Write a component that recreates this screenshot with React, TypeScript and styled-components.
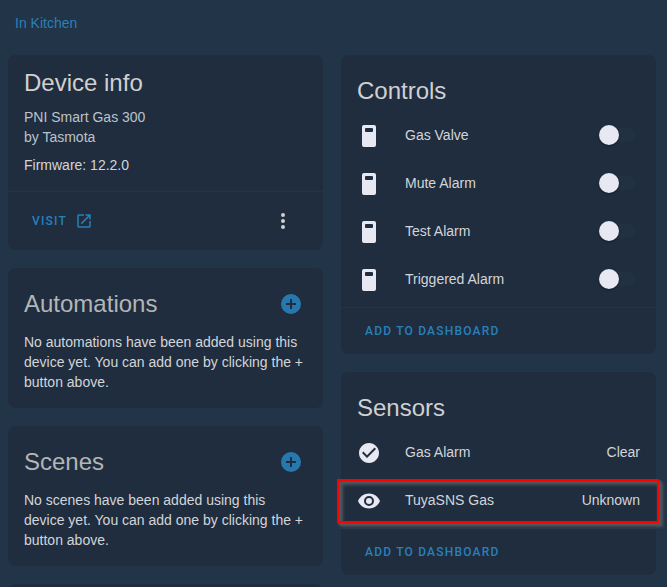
import React from "react";
import styled, { createGlobalStyle } from "styled-components";

const color = {
  page: "#223447",
  card: "#1f2d3f",
  divider: "#233447",
  link: "#2980b9",
  accent: "#2778ad",
  title: "#d0d0d0",
  mutedTitle: "#b4b5b6",
  text: "#d3d5d8",
  secondary: "#bcc3c9",
  icon: "#e8e8f3",
};

const GlobalStyle = createGlobalStyle`
  * { box-sizing: border-box; }
  html { scrollbar-width: none; background: ${color.page}; }
  body {
    margin: 0;
    background: ${color.page};
    color: ${color.text};
    font: 14px/20px "Liberation Sans", Arial, sans-serif;
  }
  button { font: inherit; border: 0; background: none; cursor: pointer; }
`;

const Page = styled.main`
  padding: 13px 11px 0 8px;
  height: 100vh;
  overflow-y: auto;
  scrollbar-width: none;
`;

const AreaBar = styled.nav`
  padding: 0 7px 22px;
`;

const AreaLink = styled.a`
  color: ${color.link};
  text-decoration: none;
`;

const Columns = styled.div`
  display: grid;
  grid-template-columns: 1fr 1fr;
  gap: 18px;
  align-items: start;
`;

const Column = styled.div`
  display: flex;
  flex-direction: column;
  gap: 18px;
  min-width: 0;
`;

const Card = styled.section`
  background: ${color.card};
  border-radius: 8px;
  min-height: 48px;
`;

const CardHeader = styled.header<{ $list?: boolean }>`
  display: flex;
  align-items: center;
  justify-content: space-between;
  padding: ${(p) => (p.$list ? "24px 16px 8px" : "24px 20px 16px 16px")};
`;

const Title = styled.h1<{ $muted?: boolean }>`
  margin: 0;
  font-size: 24px;
  line-height: 24px;
  font-weight: 400;
  color: ${(p) => (p.$muted ? color.mutedTitle : color.title)};
`;

const CardBody = styled.div`
  padding: 0 16px 16px;
`;

const InfoBody = styled.div`
  display: flex;
  flex-direction: column;
  padding: 16px;
`;

const Model = styled.div`
  margin: 12px 0 8px;
  color: ${color.secondary};
`;

const Paragraph = styled.p`
  margin: 0;
`;

const Actions = styled.footer`
  display: flex;
  align-items: center;
  justify-content: space-between;
  border-top: 1px solid ${color.divider};
  padding: 5px 16px;
`;

const TextButton = styled.button`
  && {
    display: inline-flex;
    align-items: center;
    gap: 8px;
    height: 36px;
    padding: 0 8px;
    color: ${color.link};
    font: 500 12px/16px Roboto, sans-serif;
    letter-spacing: 0.1em;
    text-transform: uppercase;
    text-decoration: none;
  }
`;

const IconButton = styled.button<{ $size: number; $tone: string }>`
  display: grid;
  place-items: center;
  width: ${(p) => p.$size}px;
  height: ${(p) => p.$size}px;
  padding: 0;
  color: ${(p) => p.$tone};
`;

const Icon = styled.svg`
  display: block;
  flex: none;
  fill: currentColor;
`;

const List = styled.ul`
  list-style: none;
  margin: 0;
  padding: 0 0 4px;
`;

const Row = styled.li`
  position: relative;
  display: flex;
  align-items: center;
  gap: 16px;
  height: 48px;
  padding: 0 16px 0 8px;
`;

const RowIcon = styled.span`
  display: grid;
  place-items: center;
  width: 40px;
  padding-top: 2px;
  color: ${color.icon};
`;

const RowLabel = styled.label`
  flex: 1;
`;

const RowName = styled.span`
  flex: 1;
`;

const Switch = styled.input`
  appearance: none;
  display: flex;
  align-items: center;
  width: 32px;
  height: 14px;
  margin: 0 5px 0 0;
  border-radius: 7px;
  background: #213142;
  cursor: pointer;

  &::before {
    content: "";
    flex: none;
    width: 20px;
    height: 20px;
    margin-left: -4px;
    border-radius: 50%;
    background: ${color.icon};
    box-shadow: 0 1px 3px rgba(0, 0, 0, 0.3);
  }

  &:checked::before {
    margin-left: 16px;
  }
`;

const Highlight = styled.span`
  position: absolute;
  inset: 3px -3px 1px -4px;
  border: 2px solid #ff0000;
  filter: drop-shadow(2px 2px 1px #55585e) drop-shadow(2px 2px 1px #55585e);
  pointer-events: none;
`;

const paths = {
  open: "M14,3V5H17.59L7.76,14.83L9.17,16.24L19,6.41V10H21V3M19,19H5V5H12V3H5C3.89,3 3,3.9 3,5V19A2,2 0 0,0 5,21H19A2,2 0 0,0 21,19V12H19V19Z",
  dots: "M12,16A2,2 0 0,1 14,18A2,2 0 0,1 12,20A2,2 0 0,1 10,18A2,2 0 0,1 12,16M12,10A2,2 0 0,1 14,12A2,2 0 0,1 12,14A2,2 0 0,1 10,12A2,2 0 0,1 12,10M12,4A2,2 0 0,1 14,6A2,2 0 0,1 12,8A2,2 0 0,1 10,6A2,2 0 0,1 12,4Z",
  plus: "M17,13H13V17H11V13H7V11H11V7H13V11H17M12,2A10,10 0 0,0 2,12A10,10 0 0,0 12,22A10,10 0 0,0 22,12A10,10 0 0,0 12,2Z",
  valve: "M7,1H17A2,2 0 0,1 19,3V21A2,2 0 0,1 17,23H7A2,2 0 0,1 5,21V3A2,2 0 0,1 7,1M9,4A1,1 0 0,0 8,5V7A1,1 0 0,0 9,8H15A1,1 0 0,0 16,7V5A1,1 0 0,0 15,4Z",
  check: "M12 2C6.5 2 2 6.5 2 12S6.5 22 12 22 22 17.5 22 12 17.5 2 12 2M10 17L5 12L6.41 10.59L10 14.17L17.59 6.58L19 8L10 17Z",
  eye: "M12,9A3,3 0 0,0 9,12A3,3 0 0,0 12,15A3,3 0 0,0 15,12A3,3 0 0,0 12,9M12,17A5,5 0 0,1 7,12A5,5 0 0,1 12,7A5,5 0 0,1 17,12A5,5 0 0,1 12,17M12,4.5C7,4.5 2.73,7.61 1,12C2.73,16.39 7,19.5 12,19.5C17,19.5 21.27,16.39 23,12C21.27,7.61 17,4.5 12,4.5Z",
};

type Glyph = keyof typeof paths;

function Mdi({ name, size = 24 }: { name: Glyph; size?: number }) {
  return (
    <Icon viewBox="0 0 24 24" width={size} height={size} aria-hidden="true">
      <path d={paths[name]} fillRule="evenodd" />
    </Icon>
  );
}

const controls = [
  { id: "gas-valve", name: "Gas Valve" },
  { id: "mute-alarm", name: "Mute Alarm" },
  { id: "test-alarm", name: "Test Alarm" },
  { id: "triggered-alarm", name: "Triggered Alarm" },
];

const sensors: { name: string; icon: Glyph; value: string; marked?: boolean }[] = [
  { name: "Gas Alarm", icon: "check", value: "Clear" },
  { name: "TuyaSNS Gas", icon: "eye", value: "Unknown", marked: true },
];

function EmptyCard({ title, kind }: { title: string; kind: string }) {
  return (
    <Card>
      <CardHeader>
        <Title $muted>{title}</Title>
        <IconButton type="button" $size={24} $tone={color.accent} aria-label={`Add ${kind}`}>
          <Mdi name="plus" />
        </IconButton>
      </CardHeader>
      <CardBody>
        <Paragraph>
          {`No ${kind} have been added using this device yet. You can add one by clicking the + button above.`}
        </Paragraph>
      </CardBody>
    </Card>
  );
}

function DashboardAction() {
  return (
    <Actions>
      <TextButton type="button">Add to dashboard</TextButton>
    </Actions>
  );
}

export default function App() {
  return (
    <>
      <GlobalStyle />
      <Page>
        <AreaBar>
          <AreaLink href="#kitchen">In Kitchen</AreaLink>
        </AreaBar>
        <Columns>
          <Column>
            <Card>
              <InfoBody>
                <Title>Device info</Title>
                <Model>
                  <div>PNI Smart Gas 300</div>
                  <div>by Tasmota</div>
                </Model>
                <div>Firmware: 12.2.0</div>
              </InfoBody>
              <Actions>
                <TextButton as="a" href="#visit">
                  Visit
                  <Mdi name="open" size={18} />
                </TextButton>
                <IconButton type="button" $size={48} $tone={color.title} aria-label="More options">
                  <Mdi name="dots" />
                </IconButton>
              </Actions>
            </Card>
            <EmptyCard title="Automations" kind="automations" />
            <EmptyCard title="Scenes" kind="scenes" />
            <Card />
          </Column>
          <Column>
            <Card>
              <CardHeader $list>
                <Title>Controls</Title>
              </CardHeader>
              <List>
                {controls.map((c) => (
                  <Row key={c.id}>
                    <RowIcon>
                      <Mdi name="valve" />
                    </RowIcon>
                    <RowLabel htmlFor={c.id}>{c.name}</RowLabel>
                    <Switch id={c.id} type="checkbox" role="switch" />
                  </Row>
                ))}
              </List>
              <DashboardAction />
            </Card>
            <Card>
              <CardHeader $list>
                <Title>Sensors</Title>
              </CardHeader>
              <List>
                {sensors.map((s) => (
                  <Row key={s.name}>
                    <RowIcon>
                      <Mdi name={s.icon} />
                    </RowIcon>
                    <RowName>{s.name}</RowName>
                    <span>{s.value}</span>
                    {s.marked && <Highlight />}
                  </Row>
                ))}
              </List>
              <DashboardAction />
            </Card>
          </Column>
        </Columns>
      </Page>
    </>
  );
}
